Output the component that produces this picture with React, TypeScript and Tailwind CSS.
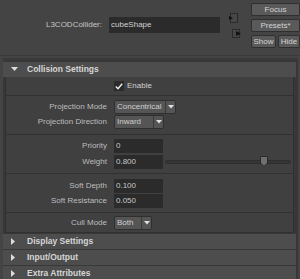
import React from 'react';

const font = { fontFamily: '"Liberation Sans", Arial, sans-serif' };

const Btn: React.FC<{ label: string; className?: string }> = ({ label, className }) => (
  <div
    className={`flex items-center justify-center h-[13px] rounded-[2px] border border-[#2f2f2f] bg-[#5a5a5a] text-[8px] text-[#d4d4d4] ${className ?? ''}`}
  >
    {label}
  </div>
);

const Field: React.FC<{ value: string; className?: string }> = ({ value, className }) => (
  <div className={`flex items-center h-[14px] bg-[#2b2b2b] pl-[2px] text-[8px] text-[#c8c8c8] ${className ?? ''}`}>
    {value}
  </div>
);

const Caret: React.FC = () => (
  <svg width="6" height="4" viewBox="0 0 6 4">
    <path d="M0 0 L6 0 L3 3.5 Z" fill="#e0e0e0" />
  </svg>
);

const Dropdown: React.FC<{ value: string; width: string }> = ({ value, width }) => (
  <div className={`flex h-[14px] ${width} rounded-[2px] border border-[#2f2f2f] bg-[#555555] text-[8px] text-[#cfcfcf]`}>
    <div className="flex flex-1 items-center pl-[2px]">{value}</div>
    <div className="flex w-[10px] items-center justify-center border-l border-[#3a3a3a]">
      <Caret />
    </div>
  </div>
);

const Row: React.FC<{ label: string; children: React.ReactNode }> = ({ label, children }) => (
  <div className="flex h-[14px] items-center gap-[7px]">
    <div className="w-[101px] text-right text-[8px] text-[#bdbdbd]">{label}</div>
    {children}
  </div>
);

const Sep: React.FC = () => <div className="h-[1px] bg-[#313131]" />;

const Header: React.FC<{ title: string; open?: boolean }> = ({ title, open }) => (
  <div className="flex h-[15px] items-center bg-[#4d4d4d] pl-[8px]">
    <div className="flex w-[16px] items-center">
      {open ? (
        <svg width="7" height="5" viewBox="0 0 7 5">
          <path d="M0 0 L7 0 L3.5 4 Z" fill="#dcdcdc" />
        </svg>
      ) : (
        <svg width="5" height="7" viewBox="0 0 5 7">
          <path d="M0 0 L4 3.5 L0 7 Z" fill="#dcdcdc" />
        </svg>
      )}
    </div>
    <span className="text-[8.5px] font-bold text-[#d6d6d6]">{title}</span>
  </div>
);

export default function App() {
  return (
    <div className="relative h-[279px] w-[300px] overflow-hidden bg-[#444444]" style={font}>
      {/* top attribute bar */}
      <div className="flex h-[56px] border-b border-[#3b3b3b]">
        <div className="mt-[17px] flex h-[16px] items-center">
          <div className="w-[102px] text-right text-[8px] text-[#c4c4c4]">L3CODCollider:</div>
          <div className="ml-[7px] flex h-[16px] w-[111px] items-center bg-[#2b2b2b] pl-[2px] text-[8px] text-[#d0d0d0]">
            cubeShape
          </div>
        </div>
        <div className="ml-[9px] flex w-[14px] flex-col">
          <svg className="mt-[13px]" width="9" height="10" viewBox="0 0 9 10">
            <rect x="1.5" y="0.5" width="7" height="9" fill="#474747" stroke="#2a2a2a" />
            <path d="M0 3 L4 5 L0 7 Z" fill="#111" />
          </svg>
          <svg className="ml-[3px] mt-[6px]" width="11" height="9" viewBox="0 0 11 9">
            <rect x="0.5" y="0.5" width="7" height="8" fill="#474747" stroke="#2a2a2a" />
            <path d="M4 2 L9 4.5 L4 7 Z" fill="#111" />
          </svg>
        </div>
        <div className="ml-[8px] mt-[3px] flex w-[50px] flex-col gap-[3px]">
          <Btn label="Focus" />
          <Btn label="Presets*" />
          <div className="flex gap-[2px]">
            <Btn label="Show" className="w-[25px]" />
            <Btn label="Hide" className="flex-1" />
          </div>
        </div>
      </div>

      {/* sections */}
      <div className="mt-[2px] ml-[3px] w-[295px] border-t border-[#3a3a3a] bg-[#383838] pt-[3px] pr-[2px]">
        <Header title="Collision Settings" open />
        <div className="mx-[2px] border-x border-b border-[#303030] bg-[#404040]">
          <div className="flex h-[18px] items-center pl-[108px]">
            <div className="flex h-[10px] w-[10px] items-center justify-center bg-[#2b2b2b]">
              <svg width="8" height="7" viewBox="0 0 8 7">
                <path d="M0.8 3.6 L3 5.8 L7.2 0.8" fill="none" stroke="#f0f0f0" strokeWidth="1.4" />
              </svg>
            </div>
            <span className="ml-[3px] text-[8px] text-[#d0d0d0]">Enable</span>
          </div>
          <Sep />
          <div className="flex h-[38px] flex-col gap-[1px] pt-[4px]">
            <Row label="Projection Mode">
              <Dropdown value="Concentrical" width="w-[62px]" />
            </Row>
            <Row label="Projection Direction">
              <Dropdown value="Inward" width="w-[50px]" />
            </Row>
          </div>
          <Sep />
          <div className="flex h-[38px] flex-col gap-[2px] pt-[4px]">
            <Row label="Priority">
              <Field value="0" className="w-[49px]" />
            </Row>
            <Row label="Weight">
              <Field value="0.800" className="w-[49px]" />
              <div className="relative ml-[-5px] h-[4px] w-[126px] rounded-[2px] border border-[#2e2e2e] bg-[#363636]">
                <svg className="absolute left-[94px] top-[-5px]" width="8" height="11" viewBox="0 0 8 11">
                  <path d="M0.5 0.5 H7.5 V7 L4 10.5 L0.5 7 Z" fill="#6f6f6f" stroke="#2a2a2a" />
                </svg>
              </div>
            </Row>
          </div>
          <Sep />
          <div className="flex h-[38px] flex-col gap-[1px] pt-[5px]">
            <Row label="Soft Depth">
              <Field value="0.100" className="w-[49px]" />
            </Row>
            <Row label="Soft Resistance">
              <Field value="0.050" className="w-[49px]" />
            </Row>
          </div>
          <Sep />
          <div className="flex h-[19px] items-center">
            <Row label="Cull Mode">
              <Dropdown value="Both" width="w-[38px]" />
            </Row>
          </div>
        </div>
        <div className="mt-[1px] flex flex-col gap-[1px]">
          <Header title="Display Settings" />
          <Header title="Input/Output" />
          <Header title="Extra Attributes" />
        </div>
      </div>
    </div>
  );
}
